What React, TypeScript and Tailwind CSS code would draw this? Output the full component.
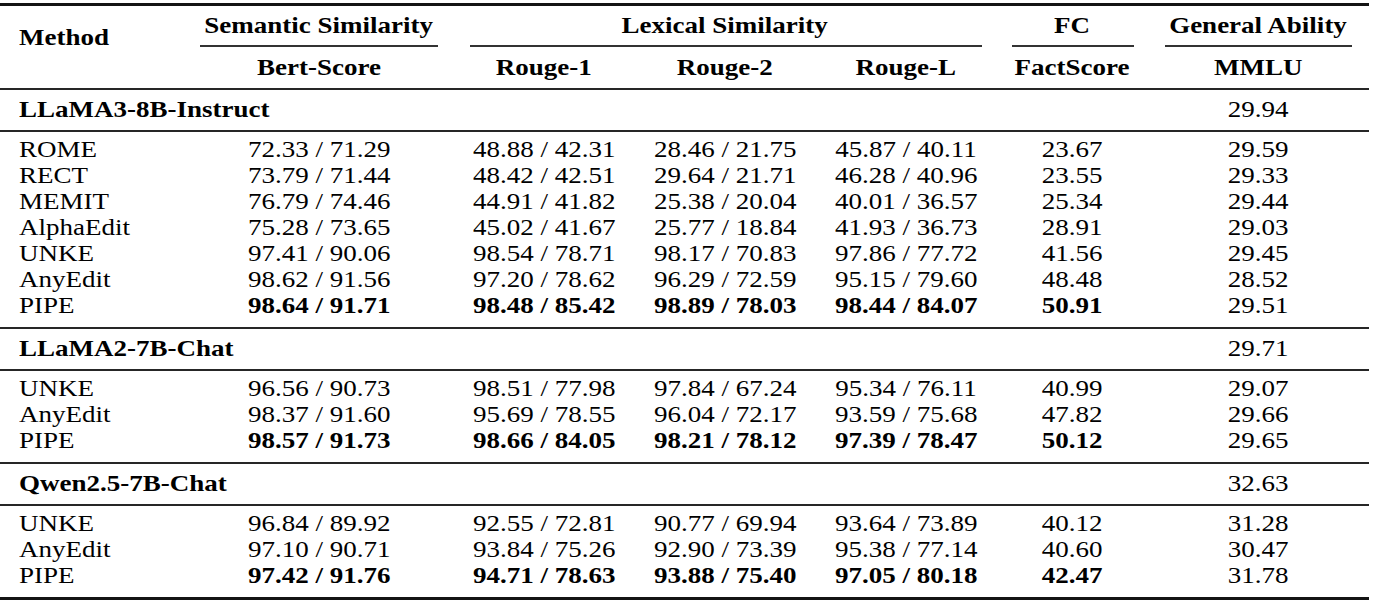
import React from 'react';

// Results table: rows are methods, grouped by base model.
interface ResultRow {
  method: string;
  bert: string;
  rouge1: string;
  rouge2: string;
  rougeL: string;
  fact: string;
  mmlu: string;
  best?: boolean;
}

interface ModelGroup {
  model: string;
  baseMmlu: string;
  rows: ResultRow[];
}

const groups: ModelGroup[] = [
  {
    model: 'LLaMA3-8B-Instruct',
    baseMmlu: '29.94',
    rows: [
      { method: 'ROME', bert: '72.33 / 71.29', rouge1: '48.88 / 42.31', rouge2: '28.46 / 21.75', rougeL: '45.87 / 40.11', fact: '23.67', mmlu: '29.59' },
      { method: 'RECT', bert: '73.79 / 71.44', rouge1: '48.42 / 42.51', rouge2: '29.64 / 21.71', rougeL: '46.28 / 40.96', fact: '23.55', mmlu: '29.33' },
      { method: 'MEMIT', bert: '76.79 / 74.46', rouge1: '44.91 / 41.82', rouge2: '25.38 / 20.04', rougeL: '40.01 / 36.57', fact: '25.34', mmlu: '29.44' },
      { method: 'AlphaEdit', bert: '75.28 / 73.65', rouge1: '45.02 / 41.67', rouge2: '25.77 / 18.84', rougeL: '41.93 / 36.73', fact: '28.91', mmlu: '29.03' },
      { method: 'UNKE', bert: '97.41 / 90.06', rouge1: '98.54 / 78.71', rouge2: '98.17 / 70.83', rougeL: '97.86 / 77.72', fact: '41.56', mmlu: '29.45' },
      { method: 'AnyEdit', bert: '98.62 / 91.56', rouge1: '97.20 / 78.62', rouge2: '96.29 / 72.59', rougeL: '95.15 / 79.60', fact: '48.48', mmlu: '28.52' },
      { method: 'PIPE', bert: '98.64 / 91.71', rouge1: '98.48 / 85.42', rouge2: '98.89 / 78.03', rougeL: '98.44 / 84.07', fact: '50.91', mmlu: '29.51', best: true },
    ],
  },
  {
    model: 'LLaMA2-7B-Chat',
    baseMmlu: '29.71',
    rows: [
      { method: 'UNKE', bert: '96.56 / 90.73', rouge1: '98.51 / 77.98', rouge2: '97.84 / 67.24', rougeL: '95.34 / 76.11', fact: '40.99', mmlu: '29.07' },
      { method: 'AnyEdit', bert: '98.37 / 91.60', rouge1: '95.69 / 78.55', rouge2: '96.04 / 72.17', rougeL: '93.59 / 75.68', fact: '47.82', mmlu: '29.66' },
      { method: 'PIPE', bert: '98.57 / 91.73', rouge1: '98.66 / 84.05', rouge2: '98.21 / 78.12', rougeL: '97.39 / 78.47', fact: '50.12', mmlu: '29.65', best: true },
    ],
  },
  {
    model: 'Qwen2.5-7B-Chat',
    baseMmlu: '32.63',
    rows: [
      { method: 'UNKE', bert: '96.84 / 89.92', rouge1: '92.55 / 72.81', rouge2: '90.77 / 69.94', rougeL: '93.64 / 73.89', fact: '40.12', mmlu: '31.28' },
      { method: 'AnyEdit', bert: '97.10 / 90.71', rouge1: '93.84 / 75.26', rouge2: '92.90 / 73.39', rougeL: '95.38 / 77.14', fact: '40.60', mmlu: '30.47' },
      { method: 'PIPE', bert: '97.42 / 91.76', rouge1: '94.71 / 78.63', rouge2: '93.88 / 75.40', rougeL: '97.05 / 80.18', fact: '42.47', mmlu: '31.78', best: true },
    ],
  },
];

const cols = 'grid grid-cols-[200px_238px_212px_150px_212px_120px_1fr]';

// The source figure is stretched a little horizontally, so glyphs get a scale-x.
function Txt({ children, left }: { children: React.ReactNode; left?: boolean }) {
  return (
    <span className={left ? 'inline-block origin-left scale-x-[1.125] whitespace-nowrap' : 'inline-block scale-x-[1.125] whitespace-nowrap'}>
      {children}
    </span>
  );
}

function Rule({ heavy }: { heavy?: boolean }) {
  return heavy ? <div className="h-[3px] bg-[#141414]" /> : <div className="h-[2px] bg-[#262626]" />;
}

function Header() {
  return (
    <div className={`${cols} font-bold`}>
      <div className="row-span-2 pl-[19px] pt-[18px]">
        <Txt left>Method</Txt>
      </div>

      <div className="pt-[6px]">
        <div className="h-[26px] text-center"><Txt>Semantic Similarity</Txt></div>
        <div className="mt-[7px] h-[2px] bg-[#333]" />
      </div>
      <div className="col-span-3 pt-[6px]">
        <div className="h-[26px] text-center"><Txt>Lexical Similarity</Txt></div>
        <div className="mt-[7px] ml-[32px] mr-[30px] h-[2px] bg-[#333]" />
      </div>
      <div className="pt-[6px]">
        <div className="h-[26px] text-center"><Txt>FC</Txt></div>
        <div className="mt-[7px] -mr-[2px] h-[2px] bg-[#333]" />
      </div>
      <div className="pt-[6px]">
        <div className="h-[26px] pl-[15px] text-center"><Txt>General Ability</Txt></div>
        <div className="mt-[7px] ml-[33px] mr-[17px] h-[2px] bg-[#333]" />
      </div>

      <div className="pt-[7px] pb-[8px] text-center"><Txt>Bert-Score</Txt></div>
      <div className="pt-[7px] pb-[8px] text-center"><Txt>Rouge-1</Txt></div>
      <div className="pt-[7px] pb-[8px] text-center"><Txt>Rouge-2</Txt></div>
      <div className="pt-[7px] pb-[8px] text-center"><Txt>Rouge-L</Txt></div>
      <div className="pt-[7px] pb-[8px] text-center"><Txt>FactScore</Txt></div>
      <div className="pt-[7px] pb-[8px] pl-[15px] text-center"><Txt>MMLU</Txt></div>
    </div>
  );
}

function DataRow({ row }: { row: ResultRow }) {
  const num = row.best ? 'text-center font-bold' : 'text-center';
  return (
    <div className={`${cols} h-[26px]`}>
      <div className="pl-[19px]"><Txt left>{row.method}</Txt></div>
      <div className={num}><Txt>{row.bert}</Txt></div>
      <div className={num}><Txt>{row.rouge1}</Txt></div>
      <div className={num}><Txt>{row.rouge2}</Txt></div>
      <div className={num}><Txt>{row.rougeL}</Txt></div>
      <div className={num}><Txt>{row.fact}</Txt></div>
      <div className="pl-[15px] text-center"><Txt>{row.mmlu}</Txt></div>
    </div>
  );
}

function Group({ group, last }: { group: ModelGroup; last: boolean }) {
  return (
    <>
      <div className={`${cols} pt-[6px] pb-[8px]`}>
        <div className="col-span-6 pl-[19px] font-bold"><Txt left>{group.model}</Txt></div>
        <div className="pl-[15px] text-center"><Txt>{group.baseMmlu}</Txt></div>
      </div>
      <Rule />
      <div className="pt-[4px] pb-[9px]">
        {group.rows.map((row) => (
          <DataRow key={row.method} row={row} />
        ))}
      </div>
      <Rule heavy={last} />
    </>
  );
}

export default function App() {
  return (
    <div className="min-h-screen bg-white pt-[3px] text-black">
      <div className="w-[1369px] font-[Liberation_Serif,Times_New_Roman,serif] text-[24px] leading-[26px]">
        <Rule heavy />
        <Header />
        <Rule />
        {groups.map((g, i) => (
          <Group key={g.model} group={g} last={i === groups.length - 1} />
        ))}
      </div>
    </div>
  );
}
